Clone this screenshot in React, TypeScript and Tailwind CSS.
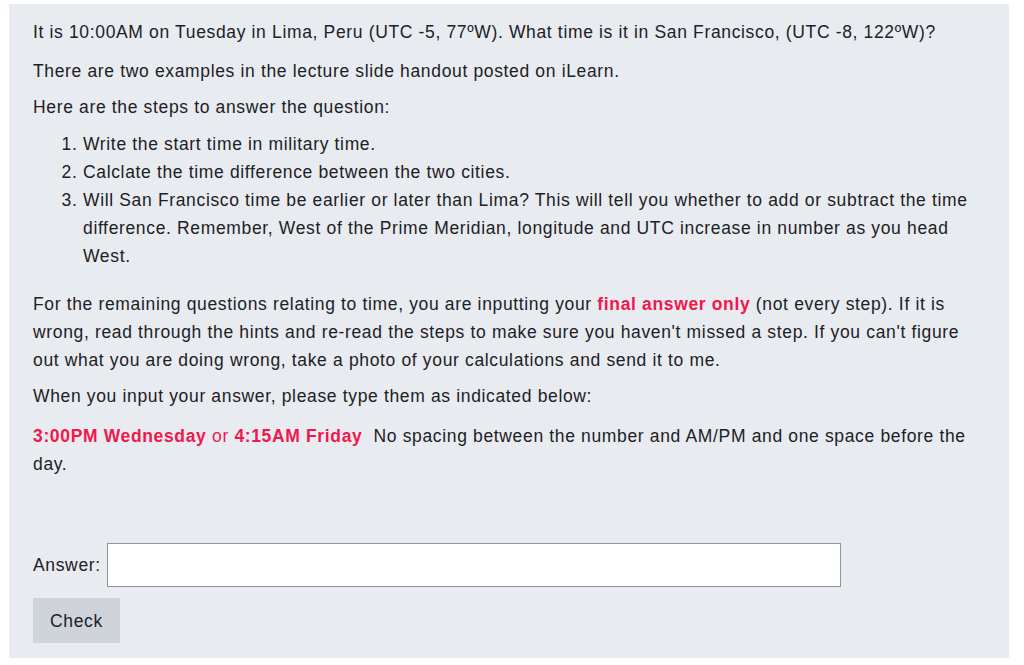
export default function App() {
  return (
    <div className="min-h-[665px] bg-white px-[9px] pt-[4px] font-['Liberation_Sans',Arial,sans-serif] text-[17.5px] leading-[28px] tracking-[0.65px] text-[#1d2125]">
      <div className="w-[1000px] bg-[#e8ebf0] pl-[24px] pr-[24px] pt-[14px] pb-[15px]">
        <p className="mb-[11px]">
          It is 10:00AM on Tuesday in Lima, Peru (UTC -5, 77ºW). What time is it in San Francisco, (UTC -8, 122ºW)?
        </p>
        <p className="mb-[8px]">There are two examples in the lecture slide handout posted on iLearn.</p>
        <p className="mb-[9px]">Here are the steps to answer the question:</p>
        <ol className="mb-[20px] list-decimal pl-[50px]">
          <li>Write the start time in military time.</li>
          <li>Calclate the time difference between the two cities.</li>
          <li>
            Will San Francisco time be earlier or later than Lima? This will tell you whether to add or subtract the time
            difference. Remember, West of the Prime Meridian, longitude and UTC increase in number as you head West.
          </li>
        </ol>
        <p className="mb-[8px]">
          For the remaining questions relating to time, you are inputting your{' '}
          <span className="font-bold text-[#f0184c]">final answer only</span> (not every step). If it is wrong, read
          through the hints and re-read the steps to make sure you haven't missed a step. If you can't figure out what
          you are doing wrong, take a photo of your calculations and send it to me.
        </p>
        <p className="mb-[12px]">When you input your answer, please type them as indicated below:</p>
        <p className="mb-[65px]">
          <span className="text-[#f0184c]">
            <span className="font-bold">3:00PM Wednesday</span> or <span className="font-bold">4:15AM Friday</span>
          </span>
          {'\u00a0 '}No spacing between the number and AM/PM and one space before the day.
        </p>
        <div className="flex items-center gap-[6px]">
          <label>Answer:</label>
          <input
            type="text"
            className="h-[44px] w-[734px] border border-[#8f959e] bg-white px-2 outline-none"
          />
        </div>
        <button className="mt-[11px] h-[45px] w-[87px] bg-[#ced4da] text-[#1d2125]">Check</button>
      </div>
    </div>
  );
}
